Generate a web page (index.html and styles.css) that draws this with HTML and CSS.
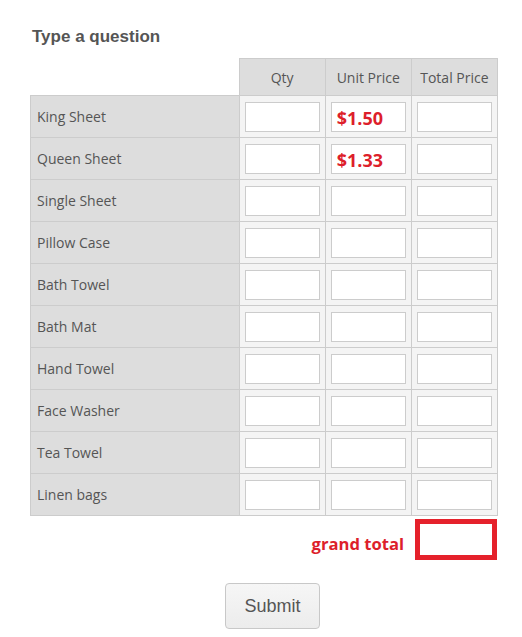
FILE: index.html
```
<!DOCTYPE html>
<html>
<head>
  <link rel="stylesheet" href="styles.css">
</head>
<body>
  <div class="form-container">
    <div class="question-title">Type a question</div>

    <table class="price-table">
      <thead>
        <tr>
          <th class="blank"></th>
          <th>Qty</th>
          <th>Unit Price</th>
          <th>Total Price</th>
        </tr>
      </thead>
      <tbody>
        <tr>
          <td class="item">King Sheet</td>
          <td><div class="box"></div></td>
          <td><div class="box price">$1.50</div></td>
          <td><div class="box"></div></td>
        </tr>
        <tr>
          <td class="item">Queen Sheet</td>
          <td><div class="box"></div></td>
          <td><div class="box price">$1.33</div></td>
          <td><div class="box"></div></td>
        </tr>
        <tr>
          <td class="item">Single Sheet</td>
          <td><div class="box"></div></td>
          <td><div class="box"></div></td>
          <td><div class="box"></div></td>
        </tr>
        <tr>
          <td class="item">Pillow Case</td>
          <td><div class="box"></div></td>
          <td><div class="box"></div></td>
          <td><div class="box"></div></td>
        </tr>
        <tr>
          <td class="item">Bath Towel</td>
          <td><div class="box"></div></td>
          <td><div class="box"></div></td>
          <td><div class="box"></div></td>
        </tr>
        <tr>
          <td class="item">Bath Mat</td>
          <td><div class="box"></div></td>
          <td><div class="box"></div></td>
          <td><div class="box"></div></td>
        </tr>
        <tr>
          <td class="item">Hand Towel</td>
          <td><div class="box"></div></td>
          <td><div class="box"></div></td>
          <td><div class="box"></div></td>
        </tr>
        <tr>
          <td class="item">Face Washer</td>
          <td><div class="box"></div></td>
          <td><div class="box"></div></td>
          <td><div class="box"></div></td>
        </tr>
        <tr>
          <td class="item">Tea Towel</td>
          <td><div class="box"></div></td>
          <td><div class="box"></div></td>
          <td><div class="box"></div></td>
        </tr>
        <tr>
          <td class="item">Linen bags</td>
          <td><div class="box"></div></td>
          <td><div class="box"></div></td>
          <td><div class="box"></div></td>
        </tr>
      </tbody>
    </table>

    <div class="grand-total">
      <span class="grand-label">grand total</span>
      <div class="grand-box"></div>
    </div>

    <div class="submit-row">
      <button class="submit-button">Submit</button>
    </div>
  </div>
</body>
</html>
```

FILE: styles.css
```
body {
  margin: 0;
  background-color: #ffffff;
  font-family: 'Open Sans', sans-serif;
  color: #555;
}

.form-container {
  padding: 27px 25px 0 30px;
}

.question-title {
  font-family: 'Liberation Sans', Arial, sans-serif;
  font-weight: bold;
  font-size: 17px;
  color: #555;
  margin-left: 2px;
  height: 31px;
}

.price-table {
  border-collapse: collapse;
  table-layout: fixed;
  width: 468px;
  font-size: 14px;
}

.price-table th {
  background-color: #dddddd;
  border: 1px solid #cccccc;
  font-weight: normal;
  height: 36px;
  padding: 0;
  text-align: center;
  color: #555;
}

.price-table th.blank {
  background-color: #ffffff;
  border: none;
  width: 208px;
}

.price-table td {
  background-color: #f4f4f4;
  border: 1px solid #cccccc;
  height: 41px;
  padding: 0;
}

.price-table td.item {
  background-color: #dddddd;
  padding-left: 6px;
  color: #555;
}

.box {
  background-color: #ffffff;
  border: 1px solid #cccccc;
  width: 73px;
  height: 28px;
  margin: 0 auto;
  box-sizing: content-box;
}

.price {
  color: #dd1f2b;
  font-weight: bold;
  font-size: 18px;
  line-height: 30px;
  padding-left: 5px;
  width: 68px;
}

.grand-total {
  display: flex;
  justify-content: flex-end;
  align-items: center;
  width: 467px;
  margin-top: 3px;
}

.grand-label {
  color: #dd1f2b;
  font-weight: bold;
  font-size: 16.6px;
  margin-right: 11px;
  margin-top: 8px;
}

.grand-box {
  width: 72px;
  height: 31px;
  border: 5px solid #e5212b;
}

.submit-row {
  width: 480px;
  display: flex;
  justify-content: center;
  margin-top: 23px;
}

.submit-button {
  font-family: 'Liberation Sans', Arial, sans-serif;
  font-size: 18px;
  color: #555;
  width: 95px;
  height: 46px;
  background: linear-gradient(#f6f6f6, #ececec);
  border: 1px solid #c8c8c8;
  border-radius: 4px;
  margin-left: 5px;
}
```
